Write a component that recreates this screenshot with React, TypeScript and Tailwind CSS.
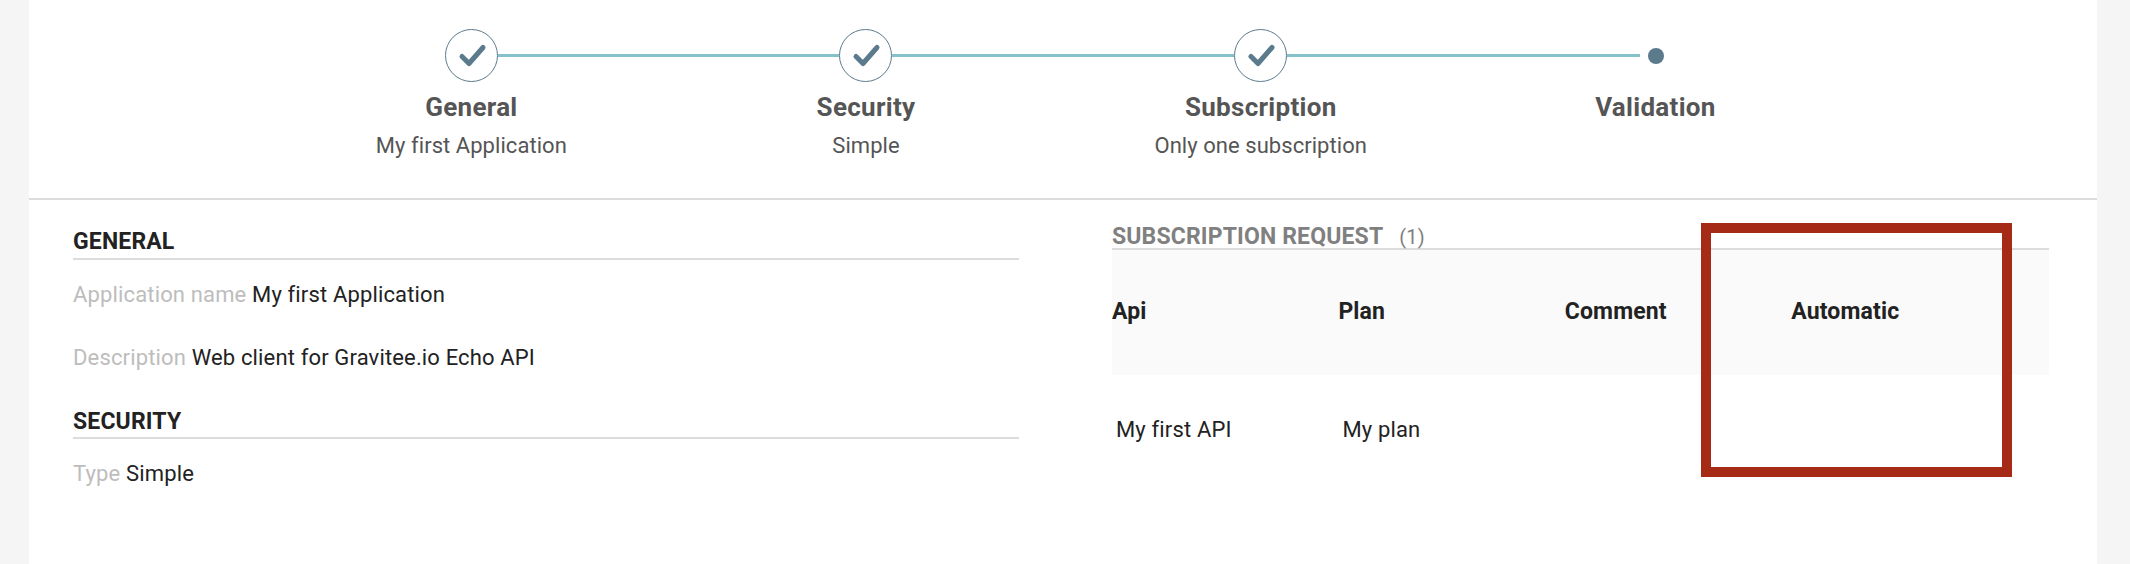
import React from "react";

const steps = [
  { title: "General", sub: "My first Application" },
  { title: "Security", sub: "Simple" },
  { title: "Subscription", sub: "Only one subscription" },
  { title: "Validation", sub: "" },
];

const Done = () => (
  <div className="w-[53px] h-[53px] shrink-0 rounded-full border border-[#5b7b8c] bg-white">
    <svg width="51" height="51" viewBox="0 0 51 51" fill="none">
      <path
        d="M16 26.5L23 33.5L37 17.5"
        stroke="#5b7b8c"
        strokeWidth="5"
        strokeLinecap="round"
        strokeLinejoin="round"
      />
    </svg>
  </div>
);

const App = () => {
  return (
    <div
      className="w-[2130px] h-[564px] overflow-hidden bg-[#f5f5f5] pl-[29px] pr-[33px]"
      style={{ fontFamily: "Roboto, 'Noto Sans', sans-serif" }}
    >
      <div className="relative h-[564px] bg-white">
        {/* Stepper */}
        <div className="h-[200px] border-b-2 border-[#dcdcdc] pt-[29px]">
          <div className="flex items-center h-[53px] pl-[416px]">
            <Done />
            <div className="h-[3px] w-[341px] bg-[#85c1cb]" />
            <Done />
            <div className="h-[3px] w-[342px] bg-[#85c1cb]" />
            <Done />
            <div className="h-[3px] w-[353px] bg-[#85c1cb]" />
            <div className="ml-2 w-4 h-4 rounded-full bg-[#5b7b8c]" />
          </div>
          <div className="grid grid-cols-[repeat(4,394.7px)] pl-[245px] mt-[9px] text-center text-[#555555]">
            {steps.map((s) => (
              <div key={s.title}>
                <div className="text-[26px] leading-[32px] font-bold tracking-[0.3px]">{s.title}</div>
                <div className="text-[22px] leading-[30px] mt-[8px] tracking-[0.05px]">{s.sub}</div>
              </div>
            ))}
          </div>
        </div>

        <div className="flex pl-[44px] pr-[48px] text-[22px] tracking-[0.15px]">
          {/* Summary */}
          <div className="w-[946px]">
            <div className="mt-[27px] text-[23px] leading-[30px] font-bold text-[#222222] border-b-2 border-[#dcdcdc] h-[33px]">
              GENERAL
            </div>
            <div className="mt-[20px] leading-[30px] text-[#222222]">
              <span className="text-[#bdbdbd]">Application name</span> My first Application
            </div>
            <div className="mt-[33px] leading-[30px] text-[#222222]">
              <span className="text-[#bdbdbd]">Description</span> Web client for Gravitee.io Echo API
            </div>
            <div className="mt-[34px] text-[23px] leading-[30px] font-bold text-[#222222] border-b-2 border-[#dcdcdc] h-[32px]">
              SECURITY
            </div>
            <div className="mt-[20px] leading-[30px] text-[#222222]">
              <span className="text-[#bdbdbd]">Type</span> Simple
            </div>
          </div>

          {/* Subscription table */}
          <div className="ml-[93px] flex-1">
            <div className="mt-[23px] h-[25px] box-content text-[23px] leading-[28px] font-bold text-[#808080] border-b-2 border-[#dcdcdc]">
              SUBSCRIPTION REQUEST
              <span className="ml-[16px] text-[20px] font-normal">(1)</span>
            </div>
            <div className="grid grid-cols-[repeat(4,226.4px)] h-[125px] items-center bg-[#fafafa] text-[23px] font-bold text-[#222222]">
              <div>Api</div>
              <div>Plan</div>
              <div>Comment</div>
              <div>Automatic</div>
            </div>
            <div className="grid grid-cols-[repeat(4,226.4px)] h-[108px] items-center pl-[4px] text-[#222222]">
              <div>My first API</div>
              <div>My plan</div>
            </div>
          </div>
        </div>

        {/* Annotation over the table */}
        <div className="absolute left-[1672px] top-[223px] w-[311px] h-[254px] border-[10px] border-[#a52b17]" />
      </div>
    </div>
  );
};

export default App;
